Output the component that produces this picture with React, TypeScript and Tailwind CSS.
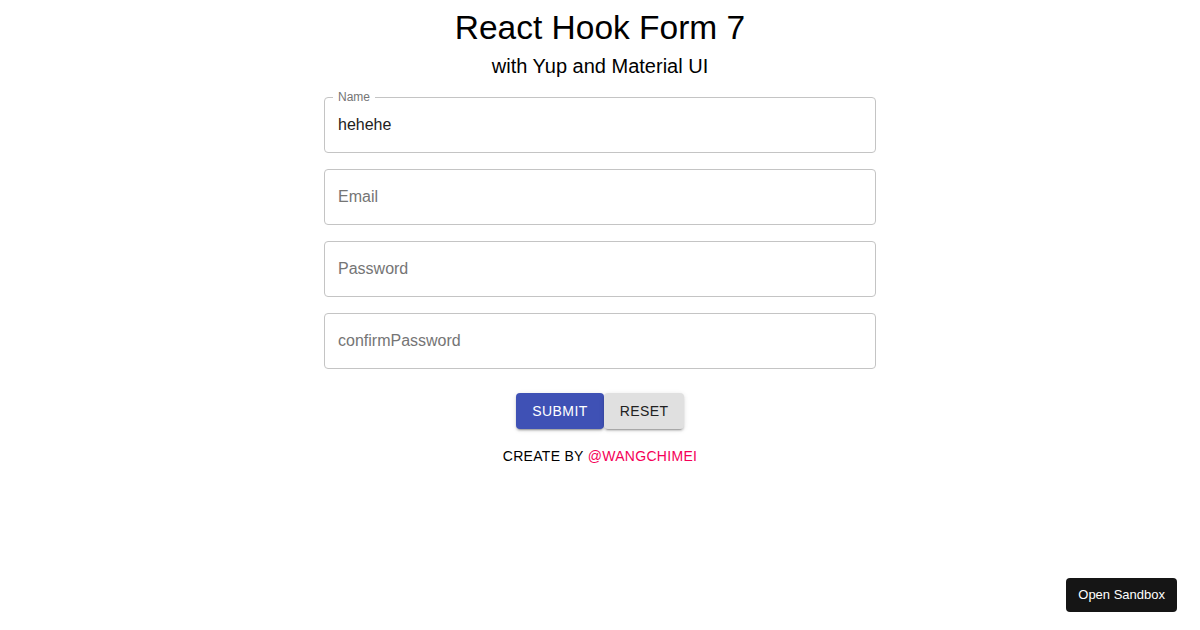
import React, { useState } from 'react';

type FieldProps = {
    id: string;
    label: string;
    type?: string;
    value: string;
    onChange: (v: string) => void;
};

const OutlinedField = ({ id, label, type = 'text', value, onChange }: FieldProps) => {
    const filled = value.length > 0;
    return (
        <div className="relative w-full h-[56px]">
            <input
                id={id}
                type={type}
                value={value}
                onChange={e => onChange(e.target.value)}
                placeholder={filled ? '' : label}
                className="w-full h-full rounded-[4px] border border-[#c4c4c4] px-[13px] text-[16px] text-[#212121] placeholder:text-[#757575] outline-none bg-white"
            />
            {filled && (
                <label
                    htmlFor={id}
                    className="absolute left-[9px] top-[-7px] px-[5px] bg-white text-[12px] leading-[15px] text-[#757575]"
                >
                    {label}
                </label>
            )}
        </div>
    );
};

const raised =
    'shadow-[0_3px_1px_-2px_rgba(0,0,0,0.2),0_2px_2px_0_rgba(0,0,0,0.14),0_1px_5px_0_rgba(0,0,0,0.12)]';

export default function App() {
    const [form, setForm] = useState({ name: 'hehehe', email: '', password: '', confirmPassword: '' });

    const set = (key: keyof typeof form) => (v: string) => setForm(prev => ({ ...prev, [key]: v }));

    return (
        <div className="min-h-[630px] bg-white font-['Liberation_Sans',Arial,sans-serif]">
            <div className="flex flex-col items-center pt-[8px]">
                <h1 className="text-[33.5px] leading-[40px] text-black">React Hook Form 7</h1>
                <h2 className="text-[20px] leading-[24px] text-black mt-[6px]">with Yup and Material UI</h2>

                <form onSubmit={e => e.preventDefault()} className="w-[552px] mt-[19px] flex flex-col gap-[16px]">
                    <OutlinedField id="name" label="Name" value={form.name} onChange={set('name')} />
                    <OutlinedField id="email" label="Email" value={form.email} onChange={set('email')} />
                    <OutlinedField id="password" label="Password" type="password" value={form.password} onChange={set('password')} />
                    <OutlinedField id="confirmPassword" label="confirmPassword" type="password" value={form.confirmPassword} onChange={set('confirmPassword')} />

                    <div className="flex justify-center mt-[8px]">
                        <button
                            type="submit"
                            className={`h-[36px] w-[88px] rounded-[4px] bg-[#3f51b5] text-white text-[14px] tracking-[0.4px] uppercase ${raised}`}
                        >
                            Submit
                        </button>
                        <button
                            type="button"
                            onClick={() => setForm({ name: '', email: '', password: '', confirmPassword: '' })}
                            className={`h-[36px] w-[80px] rounded-[4px] bg-[#e0e0e0] text-[#212121] text-[14px] tracking-[0.4px] uppercase ${raised}`}
                        >
                            Reset
                        </button>
                    </div>
                </form>

                <p className="mt-[17px] text-[14px] leading-[20px] tracking-[0.3px] text-black uppercase">
                    Create by <span className="text-[#f50057]">@wangchimei</span>
                </p>
            </div>

            <button className="fixed right-[23px] bottom-[18px] h-[34px] px-[12px] rounded-[4px] bg-[#151515] text-white text-[13px]">
                Open Sandbox
            </button>
        </div>
    );
}
